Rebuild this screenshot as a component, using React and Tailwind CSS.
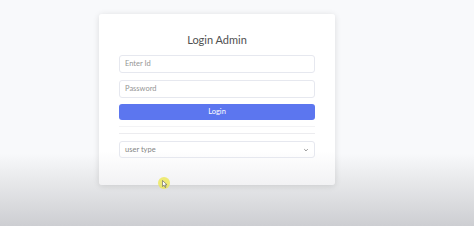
export default function App() {
  return (
    <div className="relative h-[226px] w-full overflow-hidden bg-[linear-gradient(to_bottom,#f8f9fb_0%,#f8f9fb_68%,#e9eaec_79%,#cdced2_100%)] pt-[14px] font-['Lato',sans-serif]">
      <div className="ml-[99px] flex h-[171px] w-[236px] flex-col rounded-[3px] bg-[linear-gradient(to_bottom,#ffffff_0%,#ffffff_80%,#f2f2f4_100%)] px-[20px] pt-[19px] shadow-[0_1px_6px_rgba(0,0,0,0.12)]">
        <h1 className="mb-[8px] text-center text-[11px] leading-[14px] text-[#505050]">Login Admin</h1>
        <div className="flex h-[18px] items-center rounded-[3px] border border-[#e6e8ef] px-[5px] text-[7.5px] text-[#959595]">Enter Id</div>
        <div className="mt-[7px] flex h-[18px] items-center rounded-[3px] border border-[#e6e8ef] px-[5px] text-[7.5px] text-[#959595]">Password</div>
        <button className="mt-[6px] flex h-[16px] items-center justify-center rounded-[3px] bg-[#5c76ef] text-[7.5px] text-white">Login</button>
        <div className="mt-[6px] border-t border-[#f3f3f5]"></div>
        <div className="mt-[6px] border-t border-[#ececef]"></div>
        <div className="mt-[7px] flex h-[17px] items-center justify-between rounded-[3px] border border-[#e6e8ef] px-[5px] text-[7.5px] text-[#858585]">
          <span>user type</span>
          <svg width="6" height="6" viewBox="0 0 10 10" fill="none" stroke="#888" strokeWidth="1.5">
            <path d="M2 3.5 L5 6.5 L8 3.5" />
          </svg>
        </div>
      </div>
      <div className="absolute left-[158px] top-[177px] h-[12px] w-[12px] rounded-full bg-[#ece85e] opacity-85"></div>
      <svg className="absolute left-[162px] top-[180px]" width="6" height="8" viewBox="0 0 6 8">
        <path d="M0.5 0.5 L0.5 6.5 L2 5.2 L3.2 7.5 L4 7.1 L2.9 4.9 L5 4.8 Z" fill="#fff" stroke="#555" strokeWidth="0.6" />
      </svg>
    </div>
  );
}
